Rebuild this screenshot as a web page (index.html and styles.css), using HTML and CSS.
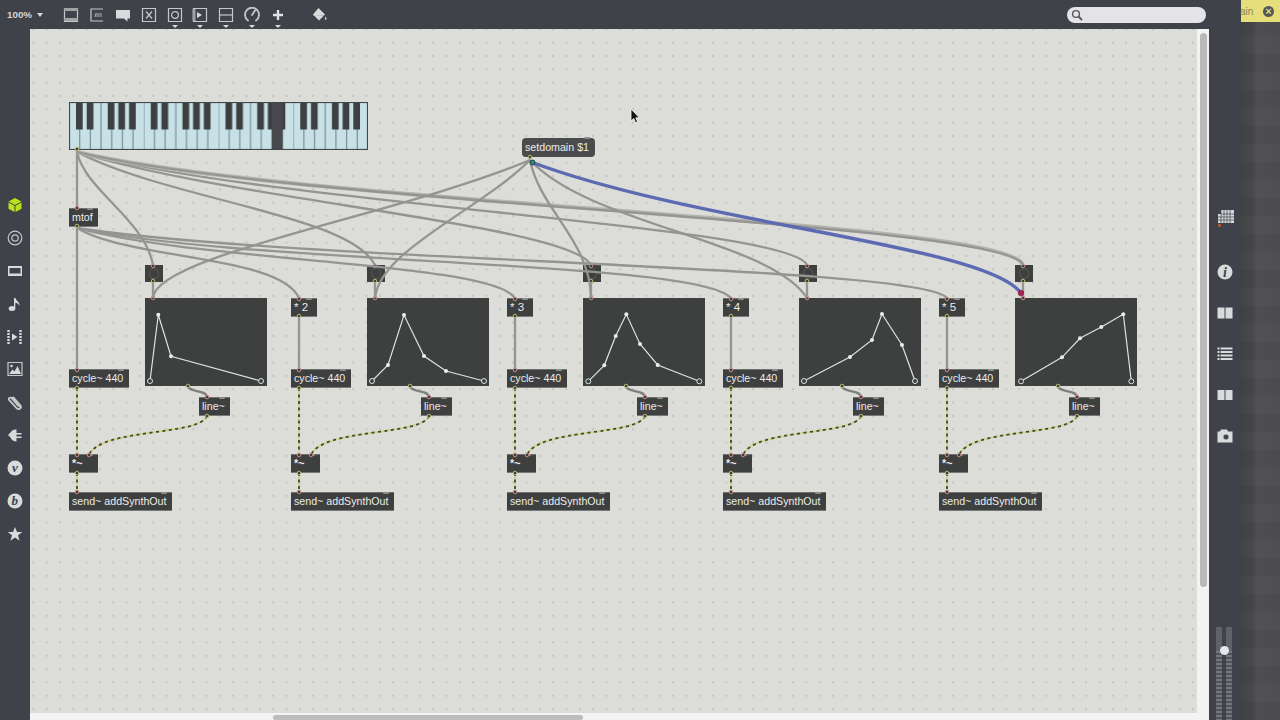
FILE: index.html
```html
<!DOCTYPE html>
<html lang="en">
<head>
<meta charset="utf-8">
<title>addSynth patcher</title>
<link rel="stylesheet" href="styles.css">
</head>
<body>
<div class="window">
  <header class="toolbar">
    <div class="zoom-level"><span>100%</span><i class="caret-down"></i></div>
    <div class="tool"><svg viewBox="0 0 16 16"><path class="ln" d="M1.5 1.5H14.5V14.5H1.5Z"/><path class="bar" d="M1 2.5H15M1 12.5H15"/></svg></div>
    <div class="tool"><svg viewBox="0 0 16 16"><path class="ln" d="M14 2H2V14H14"/><path class="ln thin" d="M6 10 7 6M8 10V6M10 10V6M12 10V6"/></svg></div>
    <div class="tool"><svg viewBox="0 0 16 16"><path class="fill" d="M1 3H15V11.5H12.5V14.5L9 11.5H1Z"/></svg></div>
    <div class="tool"><svg viewBox="0 0 16 16"><path class="ln" d="M1.5 1.5H14.5V14.5H1.5Z"/><path class="ln" d="M5 4.5 11 11.5M11 4.5 5 11.5"/></svg></div>
    <div class="tool more"><svg viewBox="0 0 16 16"><path class="ln" d="M1.5 1.5H14.5V14.5H1.5Z"/><circle class="ln" cx="8" cy="8" r="3.4"/></svg></div>
    <div class="tool more"><svg viewBox="0 0 16 16"><path class="ln" d="M1.5 1.5H14.5V14.5H1.5Z"/><path class="bar" d="M2 2V14"/><path class="fill" d="M5 5 10 8 5 11Z"/></svg></div>
    <div class="tool more"><svg viewBox="0 0 16 16"><path class="ln" d="M1.5 1.5H14.5V14.5H1.5Z"/><path class="ln" d="M1.5 8H14.5"/></svg></div>
    <div class="tool more"><svg viewBox="0 0 16 16"><path class="ln wide" d="M4 13.5A7 7 0 1 1 12 13.5"/><path class="ln wide" d="M8 8 11 3.5"/></svg></div>
    <div class="tool more"><svg viewBox="0 0 16 16"><path class="plus" d="M8 3V13M3 8H13"/></svg></div>
    <div class="tool bucket"><svg viewBox="0 0 16 16"><path class="fill" d="M7.5 1 14 7.5 13 8.5H2.5L2 7.5Z"/><path class="fill" d="M2.5 8 8 13.5 13 8.5Z"/><path class="fill" d="M14.5 9.5C15.5 11 16 12 15 13 14 13 13.5 11.500 14.500 9.500Z"/></svg></div>
    <div class="search"><svg viewBox="0 0 12 12"><circle class="mag" cx="5" cy="5" r="3.4"/><path class="mag wide" d="M7.5 7.500 11 11"/></svg></div>
  </header>
  <div class="body">
    <nav class="leftbar">
      <svg viewBox="0 0 16 16"><path class="cube" d="M8 1 14.500 4.500 8 8 1.500 4.500Z"/><path class="cube" d="M1.500 5.500 7.500 8.800V15L1.500 11.700Z"/><path class="cube" d="M14.500 5.500 8.500 8.800V15L14.500 11.700Z"/></svg>
      <svg viewBox="0 0 16 16"><circle class="ln" cx="8" cy="8" r="6.800"/><circle class="ln" cx="8" cy="8" r="3.200"/></svg>
      <svg viewBox="0 0 16 16"><path class="fill" d="M1 3H15V13H1Z"/><path class="cut" d="M2.500 5H13.500V10.500H2.500Z"/></svg>
      <svg viewBox="0 0 16 16"><ellipse class="fill" cx="5" cy="12.500" rx="3.300" ry="2.500"/><path class="fill" d="M7 2H8.500C9 5 13 5.500 12.500 10 11.500 7.500 10 7 8.300 6.800V12.500H7Z"/></svg>
      <svg viewBox="0 0 16 16"><path class="fill" d="M5 4.500 10.500 8 5 11.500Z"/><path class="dots" d="M1.500 1V15M13.500 1V15"/></svg>
      <svg viewBox="0 0 16 16"><path class="ln" d="M1 1.500H15V14.500H1Z"/><path class="fill" d="M2 13 5.500 8.500 7.500 10.500 10.500 5 14 13Z"/><circle class="fill" cx="4.500" cy="5" r="1.300"/></svg>
      <svg viewBox="0 0 16 16"><path class="ln wide" d="M12.500 12.500 5 4.500C3 2.500 .5 4.500 2.500 6.500L10 14.500C12 16 15.500 14 13.500 11.500L7 4C6 3 4.500 4 5.500 5.200L11 11.500"/></svg>
      <svg viewBox="0 0 16 16"><path class="fill" d="M1 8 3.500 5.500C5 3 7 2 9.500 2.500V6H14.500V7.500H9.500V9.500H14.500V11H9.500V14.500C7 14.500 5 13.500 3.500 10.500Z"/></svg>
      <svg viewBox="0 0 16 16"><circle class="fill" cx="8" cy="8" r="7.500"/><text class="glyph" x="8" y="11.500">v</text></svg>
      <svg viewBox="0 0 16 16"><circle class="fill" cx="8" cy="8" r="7.500"/><text class="glyph" x="7.700" y="12">b</text></svg>
      <svg viewBox="0 0 16 16"><path class="fill" d="M8 1 10 6H15.300L11 9.300 12.600 14.800 8 11.500 3.400 14.800 5 9.300 .7 6H6Z"/></svg>
    </nav>
    <div class="stage">
      <main class="canvas">
        <div class="keyboard">
          <svg viewBox="0 0 298.670 48" preserveAspectRatio="none">
            <defs>
              <pattern id="octave" width="74.667" height="48" patternUnits="userSpaceOnUse">
                <rect class="key-white" width="74.667" height="48"/>
                <path class="key-line" d="M0 0V48M10.670 0V48M21.330 0V48M32 0V48M42.670 0V48M53.330 0V48M64 0V48"/>
                <rect class="key-black" x="7" width="6.700" height="27.500"/>
                <rect class="key-black" x="17.700" width="6.700" height="27.500"/>
                <rect class="key-black" x="38.700" width="6.700" height="27.500"/>
                <rect class="key-black" x="49.300" width="6.700" height="27.500"/>
                <rect class="key-black" x="60" width="6.700" height="27.500"/>
              </pattern>
            </defs>
            <rect width="298.670" height="48" fill="url(#octave)"/>
            <rect class="key-on" x="202.700" width="10.700" height="48"/>
            <rect class="key-edge" x=".5" y=".5" width="297.670" height="47"/>
          </svg>
        </div>

        <div class="obj mtof">mtof</div>
        <div class="obj message">setdomain $1</div>

        <section class="voice v1">
          <div class="obj cycle">cycle~ 440</div>
          <div class="btn"><i></i></div>
          <div class="fn"><svg viewBox="0 0 122 88">
            <polyline points="5,83 13.300,16.700 26,58.300 116,83"/>
            <circle class="pt" cx="13.300" cy="16.700" r="2"/><circle class="pt" cx="26" cy="58.300" r="2"/>
            <circle class="end" cx="5" cy="83" r="2.500"/><circle class="end" cx="116" cy="83" r="2.500"/>
          </svg></div>
          <div class="obj line">line~</div>
          <div class="obj times">*~</div>
          <div class="obj send">send~ addSynthOut</div>
        </section>

        <section class="voice v2">
          <div class="obj mult">* 2</div>
          <div class="obj cycle">cycle~ 440</div>
          <div class="btn"><i></i></div>
          <div class="fn"><svg viewBox="0 0 122 88">
            <polyline points="5,83 21,67 37,17 57,58 79,73 117,83"/>
            <circle class="pt" cx="21" cy="67" r="2"/><circle class="pt" cx="37" cy="17" r="2"/><circle class="pt" cx="57" cy="58" r="2"/><circle class="pt" cx="79" cy="73" r="2"/>
            <circle class="end" cx="5" cy="83" r="2.500"/><circle class="end" cx="117" cy="83" r="2.500"/>
          </svg></div>
          <div class="obj line">line~</div>
          <div class="obj times">*~</div>
          <div class="obj send">send~ addSynthOut</div>
        </section>

        <section class="voice v3">
          <div class="obj mult">* 3</div>
          <div class="obj cycle">cycle~ 440</div>
          <div class="btn"><i></i></div>
          <div class="fn"><svg viewBox="0 0 122 88">
            <polyline points="5.300,83.300 21.300,67.300 32.700,38 43.300,16.300 57,46 74.700,67 116.300,83.300"/>
            <circle class="pt" cx="21.300" cy="67.300" r="2"/><circle class="pt" cx="32.700" cy="38" r="2"/><circle class="pt" cx="43.300" cy="16.300" r="2"/><circle class="pt" cx="57" cy="46" r="2"/><circle class="pt" cx="74.700" cy="67" r="2"/>
            <circle class="end" cx="5.300" cy="83.300" r="2.500"/><circle class="end" cx="116.300" cy="83.300" r="2.500"/>
          </svg></div>
          <div class="obj line">line~</div>
          <div class="obj times">*~</div>
          <div class="obj send">send~ addSynthOut</div>
        </section>

        <section class="voice v4">
          <div class="obj mult">* 4</div>
          <div class="obj cycle">cycle~ 440</div>
          <div class="btn"><i></i></div>
          <div class="fn"><svg viewBox="0 0 122 88">
            <polyline points="5,83 51,59 73,42 83,16 103,47 116,83"/>
            <circle class="pt" cx="51" cy="59" r="2"/><circle class="pt" cx="73" cy="42" r="2"/><circle class="pt" cx="83" cy="16" r="2"/><circle class="pt" cx="103" cy="47" r="2"/>
            <circle class="end" cx="5" cy="83" r="2.500"/><circle class="end" cx="116" cy="83" r="2.500"/>
          </svg></div>
          <div class="obj line">line~</div>
          <div class="obj times">*~</div>
          <div class="obj send">send~ addSynthOut</div>
        </section>

        <section class="voice v5">
          <div class="obj mult">* 5</div>
          <div class="obj cycle">cycle~ 440</div>
          <div class="btn"><i></i></div>
          <div class="fn"><svg viewBox="0 0 122 88">
            <polyline points="6,83.300 47,59.300 65,40.300 86.300,29 108.300,16.300 116.300,83.300"/>
            <circle class="pt" cx="47" cy="59.300" r="2"/><circle class="pt" cx="65" cy="40.300" r="2"/><circle class="pt" cx="86.300" cy="29" r="2"/><circle class="pt" cx="108.300" cy="16.300" r="2"/>
            <circle class="end" cx="6" cy="83.300" r="2.500"/><circle class="end" cx="116.300" cy="83.300" r="2.500"/>
          </svg></div>
          <div class="obj line">line~</div>
          <div class="obj times">*~</div>
          <div class="obj send">send~ addSynthOut</div>
        </section>

        <svg class="wires" viewBox="30 29 1167 684">
          <defs>
            <g id="voice-wires">
              <path class="wire" d="M153 282V298"/>
              <path class="wire thin" d="M188 386C189 393 206 389 207 397"/>
              <path class="sig" d="M77 388V455M207 416C200 436 100 428 89 455M77 473V492"/>
              <path class="sig dash" d="M77 388V455M207 416C200 436 100 428 89 455M77 473V492"/>
              <circle class="in" cx="153" cy="266" r="1.800"/><circle class="out" cx="153" cy="281" r="1.800"/>
              <circle class="in" cx="153" cy="298" r="1.800"/><circle class="out" cx="188" cy="386" r="1.800"/>
              <circle class="in" cx="207" cy="397" r="1.800"/><circle class="out" cx="207" cy="416" r="1.800"/>
              <circle class="in" cx="77" cy="370" r="1.800"/><circle class="out" cx="77" cy="388" r="1.800"/>
              <circle class="in" cx="77" cy="455" r="1.800"/><circle class="in" cx="89" cy="455" r="1.800"/>
              <circle class="out" cx="77" cy="473" r="1.800"/><circle class="in" cx="77" cy="492" r="1.800"/>
            </g>
          </defs>
          <use href="#voice-wires"/>
          <use href="#voice-wires" x="222"/>
          <use href="#voice-wires" x="438"/>
          <use href="#voice-wires" x="654"/>
          <use href="#voice-wires" x="870"/>

          <path class="wire" d="M77 150V208M77 226V369"/>
          <path class="wire" d="M77 152C85 190 145 220 153 265"/>
          <path class="wire" d="M77 152C170 200 350 215 375 265"/>
          <path class="wire" d="M77 152C230 200 570 225 591 265"/>
          <path class="wire" d="M77 152C270 205 790 225 807 265"/>
          <path class="wire ghost" d="M77 152C300 205 1010 220 1023 265"/>
          <path class="wire" d="M77 152C300 205 1010 222 1023 265"/>

          <path class="wire" d="M77 228C130 260 280 255 299 298"/>
          <path class="wire" d="M77 228C200 262 490 262 515 298"/>
          <path class="wire" d="M77 228C250 265 700 260 731 298"/>
          <path class="wire" d="M77 228C300 262 920 265 947 298"/>
          <path class="wire" d="M299 316V369M515 316V369M731 316V369M947 316V369"/>

          <path class="wire" d="M530 160C400 215 155 255 153 298"/>
          <path class="wire" d="M530 160C480 210 380 250 375 298"/>
          <path class="wire" d="M530 160C540 210 590 240 591 298"/>
          <path class="wire" d="M530 160C590 225 770 240 807 298"/>
          <path class="wire blue" d="M531 162C700 225 985 245 1021 293"/>

          <circle class="in" cx="77" cy="208" r="1.800"/><circle class="out" cx="77" cy="149" r="1.800"/><circle class="out" cx="77" cy="226" r="1.800"/>
          <circle class="in" cx="299" cy="299" r="1.800"/><circle class="in" cx="515" cy="299" r="1.800"/><circle class="in" cx="731" cy="299" r="1.800"/><circle class="in" cx="947" cy="299" r="1.800"/>
          <circle class="out" cx="299" cy="316" r="1.800"/><circle class="out" cx="515" cy="316" r="1.800"/><circle class="out" cx="731" cy="316" r="1.800"/><circle class="out" cx="947" cy="316" r="1.800"/>
          <circle class="out" cx="530" cy="157" r="1.800"/>
          <circle class="hot-green" cx="532.500" cy="162.500" r="2.500"/>
          <circle class="hot-red" cx="1021" cy="293" r="2.800"/>
        </svg>

        <svg class="cursor" viewBox="0 0 10 16"><path d="M1 1V13L3.800 10.500 5.600 14.800 7.600 14 5.800 9.800H9.400Z"/></svg>
      </main>
      <div class="hscroll"><div class="hthumb"></div></div>
    </div>
    <div class="vscroll"><div class="vthumb"></div></div>
    <aside class="rightbar">
      <svg class="grid-icon" viewBox="0 0 18 18"><path class="gridfill" d="M5 1H18V14H2V5H5Z"/><path class="gridcut" d="M5 5H18M2 8H18M2 11H18M5 1V14M8 1V14M11 1V14M14 1V14"/><path class="gridred" d="M2 15H5V18H2Z"/></svg>
      <svg viewBox="0 0 16 16"><circle class="fill" cx="8" cy="8" r="7.500"/><text class="glyph ibeam" x="8" y="12.500">i</text></svg>
      <svg viewBox="0 0 16 16"><path class="fill" d="M.5 2.500H7.500V13.500H.5ZM8.500 2.500H15.500V13.500H8.500Z"/></svg>
      <svg viewBox="0 0 16 16"><path class="fill" d="M.5 1.500H2.500V3.500H.5ZM3.500 1.500H15.500V3.500H3.500ZM.5 5H2.500V7H.5ZM3.500 5H15.500V7H3.500ZM.5 8.500H2.500V10.500H.5ZM3.500 8.500H15.500V10.500H3.500ZM.5 12H2.500V14H.5ZM3.500 12H15.500V14H3.500Z"/></svg>
      <svg viewBox="0 0 16 16"><path class="fill" d="M.5 3H7.500V13H.5ZM8.500 3H15.500V13H8.500Z"/></svg>
      <svg viewBox="0 0 16 16"><path class="fill" d="M.5 3.500H3L4 1.500H10L11 3.500H15.500V14.500H.5Z"/><circle class="cam" cx="9" cy="9" r="2.800"/></svg>
      <div class="meter"><i class="knob"></i></div>
    </aside>
  </div>
</div>
<div class="far">
  <div class="tab"><span>ain</span><b class="close">×</b></div>
</div>
</body>
</html>
```
FILE: styles.css
```css
* { box-sizing: border-box; }
html, body { margin: 0; height: 100%; }
body {
  width: 1280px;
  height: 720px;
  overflow: hidden;
  display: flex;
  background: #3f4249;
  font-family: "Liberation Sans", Arial, sans-serif;
}

/* shared icon paint */
svg { display: block; }
.ln { fill: none; stroke: #c6c8ca; stroke-width: 1.2; }
.ln.thin { stroke-width: .8; }
.ln.wide { stroke-width: 1.8; stroke-linecap: round; }
.bar { fill: none; stroke: #a0a2a4; stroke-width: 3; }
.fill { fill: #d8dadb; }
.plus { fill: none; stroke: #e2e3e4; stroke-width: 2.4; }
.cut { fill: #3f4249; }
.dots { fill: none; stroke: #d8dadb; stroke-width: 2.4; stroke-dasharray: 2 1; }
.cube { fill: #b9e21c; }
.glyph { font-family: "Liberation Serif", serif; font-style: italic; font-weight: 700; font-size: 13px; text-anchor: middle; fill: #3f4249; }
.ibeam { font-size: 14px; }
.cam { fill: #3f4249; stroke: #d8dadb; stroke-width: .5; }

.window { width: 1241px; flex: none; display: flex; flex-direction: column; }

/* toolbar */
.toolbar { height: 29px; flex: none; display: flex; align-items: center; background: #3f4249; }
.zoom-level { width: 58px; padding-left: 7px; display: flex; align-items: center; gap: 5px; color: #d6d7d9; font-size: 9.800px; font-weight: 700; }
.caret-down { width: 0; height: 0; border: 3px solid transparent; border-top: 4px solid #d6d7d9; border-bottom: 0; }
.tool { width: 25.900px; flex: none; display: flex; justify-content: center; position: relative; }
.tool svg { width: 16px; height: 16px; }
.tool.more::after {
  content: "";
  position: absolute;
  left: 50%;
  bottom: -5px;
  margin-left: -3px;
  border: 3px solid transparent;
  border-top: 3px solid #d8dadb;
  border-bottom: 0;
}
.bucket { margin-left: 15px; }
.search { width: 139px; height: 16px; margin-left: auto; margin-right: 35px; padding: 2px 0 0 4px; border-radius: 8px; background: #e4e3e7; }
.search svg { width: 12px; height: 12px; }
.mag { fill: none; stroke: #55585e; stroke-width: 1.400; }
.mag.wide { stroke-width: 2; }

.body { flex: 1; min-height: 0; display: flex; }

/* left palette */
.leftbar { width: 30px; flex: none; display: flex; flex-direction: column; align-items: center; gap: 16.900px; padding-top: 168px; }
.leftbar svg { width: 16px; height: 16px; }

.stage { width: 1167px; flex: none; display: flex; flex-direction: column; }
.canvas {
  flex: 1;
  position: relative;
  overflow: hidden;
  background-color: #dcdcd8;
  background-image: radial-gradient(circle at center, #bbbbb6 .55px, transparent 1.050px);
  background-size: 13.333px 13.333px;
  background-position: -3.370px -6.370px;
}
.hscroll { height: 7px; flex: none; background: #f3f3f4; }
.hthumb { width: 310px; height: 5px; margin: 2px 0 0 243px; border-radius: 3px; background: #bcbcbc; }
.vscroll { width: 12px; flex: none; padding: 4px 2px 0 3px; background: #f3f3f4; }
.vthumb { height: 554px; border-radius: 4px; background: #b9b9b9; }

/* right palette */
.rightbar { width: 32px; flex: none; display: flex; flex-direction: column; align-items: center; gap: 25px; padding-top: 180px; position: relative; }
.rightbar svg { width: 16px; height: 16px; }
.rightbar .grid-icon { width: 18px; height: 18px; margin-bottom: 12px; margin-left: -1px; }
.gridfill { fill: #d5d7d8; }
.gridcut { fill: none; stroke: #3f4249; stroke-width: .7; }
.gridred { fill: #a5573a; }
.meter {
  position: absolute;
  left: 7px;
  top: 598px;
  width: 17px;
  height: 93px;
  background:
    linear-gradient(#5f6268, #5f6268) 0 0 / 6px 24px no-repeat,
    linear-gradient(#5f6268, #5f6268) 10px 0 / 6px 24px no-repeat,
    repeating-linear-gradient(#73767c 0 2px, #505359 2px 4px) 0 24px / 6px 69px no-repeat,
    repeating-linear-gradient(#73767c 0 2px, #505359 2px 4px) 10px 24px / 6px 69px no-repeat;
}
.knob { position: absolute; left: 3.500px; top: 19px; width: 9px; height: 9px; border-radius: 50%; background: #e7e7e9; }

/* far right, behind the patcher */
.far {
  flex: 1;
  position: relative;
  background:
    linear-gradient(90deg, rgba(30,30,32,.22) 0, rgba(30,30,32,.12) 12px, rgba(255,255,255,.02) 16px, rgba(255,255,255,0) 100%),
    repeating-linear-gradient(#4f4e51 0 18px, #4b4a4d 18px 36px);
}
.tab { height: 22px; display: flex; align-items: center; justify-content: space-between; padding: 0 6px 0 0; background: #e6dd7b; }
.tab span { margin-left: -1px; color: #8b8758; font-size: 10px; }
.close { width: 11px; height: 11px; border-radius: 50%; background: #55565c; color: #e6dd7b; font-size: 11px; line-height: 10px; text-align: center; }

/* keyboard */
.keyboard { position: absolute; left: 39px; top: 73px; width: 299px; height: 48px; }
.keyboard svg { width: 100%; height: 100%; }
.key-white { fill: #c7e1e6; }
.key-line { fill: none; stroke: #7a8f94; stroke-width: 1.200; }
.key-black { fill: #3e3f40; }
.key-on { fill: #48494e; }
.key-edge { fill: none; stroke: #41484a; stroke-width: 1.200; }

/* patcher objects: places on the free canvas */
.voice { position: absolute; top: 0; left: 0; }
.v1 { left: 39px; }
.v2 { left: 261px; }
.v3 { left: 477px; }
.v4 { left: 693px; }
.v5 { left: 909px; }

.obj {
  position: absolute;
  height: 19px;
  padding-left: 3px;
  line-height: 17px;
  white-space: nowrap;
  color: #ececea;
  font-size: 10.670px;
  background: #3e3f3f;
  border-top: 1px solid #6f706f;
  border-bottom: 1px solid #77787a;
}
.obj::after { content: ""; position: absolute; right: 5px; top: -1px; width: 6px; height: 2px; border-radius: 1px; background: #8b8c8c; }
.mtof { left: 39px; top: 179px; width: 29px; }
.message { left: 492px; top: 109px; width: 73px; height: 19px; padding-left: 3px; border: 0; border-radius: 4px; line-height: 19px; background: #4a4b4c; }
.cycle { left: 0; top: 340px; width: 60px; }
.mult { left: 0; top: 269px; width: 26px; font-size: 11.500px; }
.line { left: 130px; top: 368px; width: 31px; }
.times { left: 0; top: 425px; width: 29px; font-weight: 700; }
.send { left: 0; top: 463px; width: 103px; }
.btn { position: absolute; left: 76px; top: 236px; width: 18px; height: 17px; padding: 3px 4px; background: #3e3f3f; }
.btn i { display: block; width: 10px; height: 11px; border: 1px solid #555656; border-radius: 50%; }
.fn { position: absolute; left: 76px; top: 269px; width: 122px; height: 88px; background: #3e3f3f; }
.fn svg { width: 100%; height: 100%; }
.fn polyline { fill: none; stroke: #dbe4e1; stroke-width: 1.200; }
.pt { fill: #e6efed; }
.end { fill: #3e3f3f; stroke: #dbe4e1; stroke-width: 1; }

/* patch cords, drawn over the objects */
.wires { position: absolute; left: 0; top: 0; width: 1167px; height: 684px; pointer-events: none; }
.wire { fill: none; stroke: #949492; stroke-width: 2.300; }
.wire.thin { stroke: #7f7f7d; }
.wire.ghost { stroke: #b5b5ae; stroke-width: 4; }
.wire.blue { stroke: #5c6ab2; stroke-width: 3.400; }
.sig { fill: none; stroke: #cfd388; stroke-width: 1.800; }
.sig.dash { stroke: #45472f; stroke-dasharray: 3 3.500; stroke-width: 1.800; }
.in { fill: #3e3f3f; stroke: #c88a86; stroke-width: 1; }
.out { fill: #3e3f3f; stroke: #b8bb72; stroke-width: 1; }
.hot-green { fill: #2a8a66; stroke: #24415a; stroke-width: 1; }
.hot-red { fill: #b01e4e; stroke: #7a3050; stroke-width: .8; }
.cursor { position: absolute; left: 600px; top: 79px; width: 10px; height: 16px; }
.cursor path { fill: #111; stroke: #fff; stroke-width: .8; }
```
